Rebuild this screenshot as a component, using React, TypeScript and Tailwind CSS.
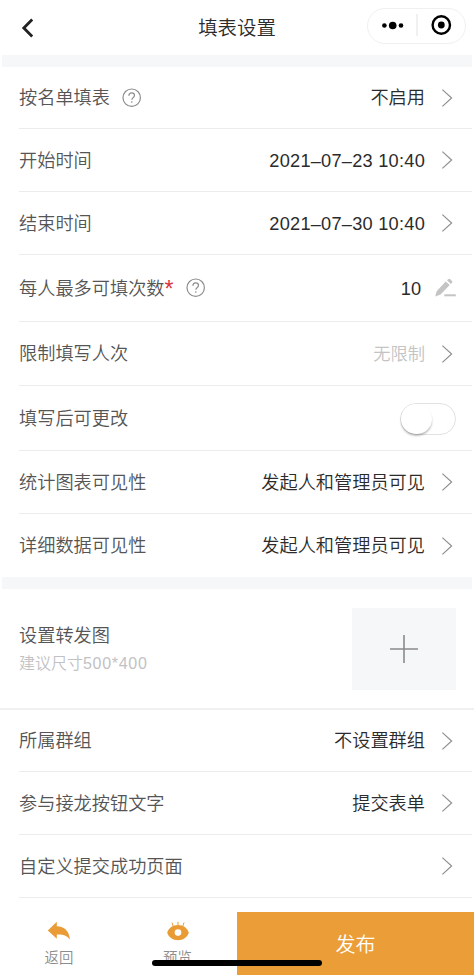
import type { ReactNode } from "react";
import clsx from "clsx";

type RowProps = {
  label: string;
  value?: string;
  height: string;
  required?: boolean;
  help?: boolean;
  muted?: boolean;
  last?: boolean;
  children?: ReactNode;
};

function HelpIcon() {
  return (
    <svg className="ml-3 h-5 w-5" viewBox="0 0 20 20" fill="none" stroke="#8c8c8c" strokeWidth="1.2">
      <circle cx="9.7" cy="9.7" r="8.7" />
      <path d="M6.9 7.8c0-1.8 1.2-2.9 2.8-2.9s2.8 1.1 2.8 2.6c0 1.9-2.7 2-2.7 4.3" />
      <path d="M9.8 13.2v1.5" />
    </svg>
  );
}

function Chevron() {
  return (
    <svg className="ml-4 h-5 w-3" viewBox="0 0 12 20" fill="none" stroke="#8f8f8f" strokeWidth="1.2">
      <path d="M1.4 1.6 10.6 10 1.4 18.4" />
    </svg>
  );
}

function EditIcon() {
  return (
    <svg className="ml-3.5 -mr-[3px] h-5 w-[21px]" viewBox="0 0 21 20" fill="#c4c4c4">
      <path d="M0.2 18.4 1.8 13 10.7 3.4 14.7 7 5.6 16.4Z" />
      <path d="M12 2.3 13.2 1.2Q14.2.5 15.3 1.3L17 2.9Q17.8 3.9 17 4.8L15.8 5.9Z" />
      <rect x="9.3" y="16.3" width="11.5" height="2" />
    </svg>
  );
}

function Row({ label, value, height, required, help, muted, last, children }: RowProps) {
  return (
    <div className={clsx("ml-[19px] mr-0.5 flex items-center justify-between", height, !last && "border-b border-[#ececee]")}>
      <div className="flex items-center text-[#555]">
        <span className="pt-px">{label}</span>
        {required && <span className="w-[9px] pt-0.5 text-[23px] leading-6 text-[#d9363e]">*</span>}
        {help && <HelpIcon />}
      </div>
      <div className="flex items-center pr-[19px]">
        {value && (
          <span
            className={clsx(
              "pt-px",
              muted ? "text-[17.3px] text-[#c4c4c4]" : "text-[#2b2b2b]",
              value.includes(":") && "tracking-[0.25px]"
            )}
          >
            {value}
          </span>
        )}
        {children ?? <Chevron />}
      </div>
    </div>
  );
}

function Header() {
  return (
    <header className="grid h-[55px] grid-cols-[1fr_auto_1fr] items-center">
      <svg className="ml-5 h-5 w-3.5" viewBox="0 0 14 20" fill="none" stroke="#222" strokeWidth="2.8">
        <path d="M12.2 1.5 3.8 10l8.4 8.5" />
      </svg>
      <h1 className="pt-px text-[19.4px] text-[#2b2b2b]">填表设置</h1>
      <div className="mr-2 -mt-1 flex h-9 w-[99px] items-center justify-self-end rounded-full border border-[#f0f0f0]">
        <svg className="h-6 w-full" viewBox="0 0 97 24">
          <circle cx="16.4" cy="11.5" r="2.3" />
          <circle cx="24.7" cy="11.5" r="3.8" />
          <circle cx="33" cy="11.5" r="2.3" />
          <path d="M49 0v22" stroke="#e2e2e2" />
          <circle cx="73.3" cy="11" r="8.7" fill="none" stroke="#000" strokeWidth="2.4" />
          <circle cx="73.3" cy="11" r="3.4" />
        </svg>
      </div>
    </header>
  );
}

function Footer() {
  return (
    <footer className="relative flex h-[63px]">
      <button className="flex w-[118px] flex-col items-center pt-[9px] text-[14.4px] leading-5 text-[#8c8c8c]">
        <svg className="h-5 w-6" viewBox="0 0 24 20" fill="#e99c35">
          <path d="M.8 9.5 9.8.8v4.4C17.5 5.5 22 9.5 23 18.5 19.4 14.2 16 13.3 9.8 13.5v4.2Z" />
        </svg>
        <span className="mt-[7px]">返回</span>
      </button>
      <button className="flex w-[119px] flex-col items-center pt-[9px] text-[14.4px] leading-5 text-[#8c8c8c]">
        <svg className="h-5 w-6" viewBox="0 0 24 20">
          <path d="M1.2 11.8C2.5 6.8 6.8 3.9 12 3.9s9.5 2.9 10.8 7.9c-1.6 4.8-6 7.5-10.8 7.5s-9.2-2.7-10.8-7.5Z" fill="#e99c35" />
          <path d="M12 5V.8M7.5 6 6 1.6M16.5 6 18 1.6" stroke="#e99c35" strokeWidth="1" />
          <circle cx="12" cy="11.6" r="3.3" fill="#fff" />
        </svg>
        <span className="mt-[7px]">预览</span>
      </button>
      <button className="flex-1 bg-[#eb9e38] pt-0.5 text-[20px] text-white">发布</button>
      <div className="absolute bottom-[9px] left-[152px] h-[6px] w-[170px] rounded-full bg-black" />
    </footer>
  );
}

export default function App() {
  return (
    <div className="flex h-[975px] w-[474px] flex-col overflow-hidden bg-white font-['Liberation_Sans','Noto_Sans_CJK_SC',sans-serif] text-[18.2px] leading-7 font-[350]">
      <Header />
      <div className="mx-0.5 h-3 bg-[#f6f7f9]" />
      <Row label="按名单填表" value="不启用" height="h-[62px]" help />
      <Row label="开始时间" value="2021–07–23 10:40" height="h-[63px]" />
      <Row label="结束时间" value="2021–07–30 10:40" height="h-[63px]" />
      <Row label="每人最多可填次数" value="10" height="h-[67px]" required help>
        <EditIcon />
      </Row>
      <Row label="限制填写人次" value="无限制" height="h-16" muted />
      <Row label="填写后可更改" height="h-[65px]">
        <div className="-mr-[3px] mt-px h-8 w-14 rounded-full border border-[#e2e2e2]">
          <div className="h-[30px] w-[31px] rounded-full bg-white shadow-[0_2px_2px_rgba(0,0,0,0.25)]" />
        </div>
      </Row>
      <Row label="统计图表可见性" value="发起人和管理员可见" height="h-[63px]" />
      <Row label="详细数据可见性" value="发起人和管理员可见" height="h-[63px]" last />
      <div className="mx-0.5 h-3 bg-[#f6f7f9]" />
      <div className="flex h-[121px] items-center justify-between border-b-2 border-[#f0f0f1] pl-[19px] pr-[18px]">
        <div className="pt-0.5">
          <div className="text-[#555]">设置转发图</div>
          <div className="text-[16px] text-[#c2c2c4]">
            建议尺寸<span className="tracking-[0.7px]">500*400</span>
          </div>
        </div>
        <div className="flex h-[82px] w-[104px] items-center justify-center bg-[#f6f7f9]">
          <svg className="h-7 w-7" viewBox="0 0 28 28" stroke="#8a8a8d" strokeWidth="1.6">
            <path d="M14 0v28M0 14h28" />
          </svg>
        </div>
      </div>
      <Row label="所属群组" value="不设置群组" height="h-[62px]" />
      <Row label="参与接龙按钮文字" value="提交表单" height="h-[63px]" />
      <Row label="自定义提交成功页面" height="h-[63px]" />
      <div className="flex-1" />
      <Footer />
    </div>
  );
}
